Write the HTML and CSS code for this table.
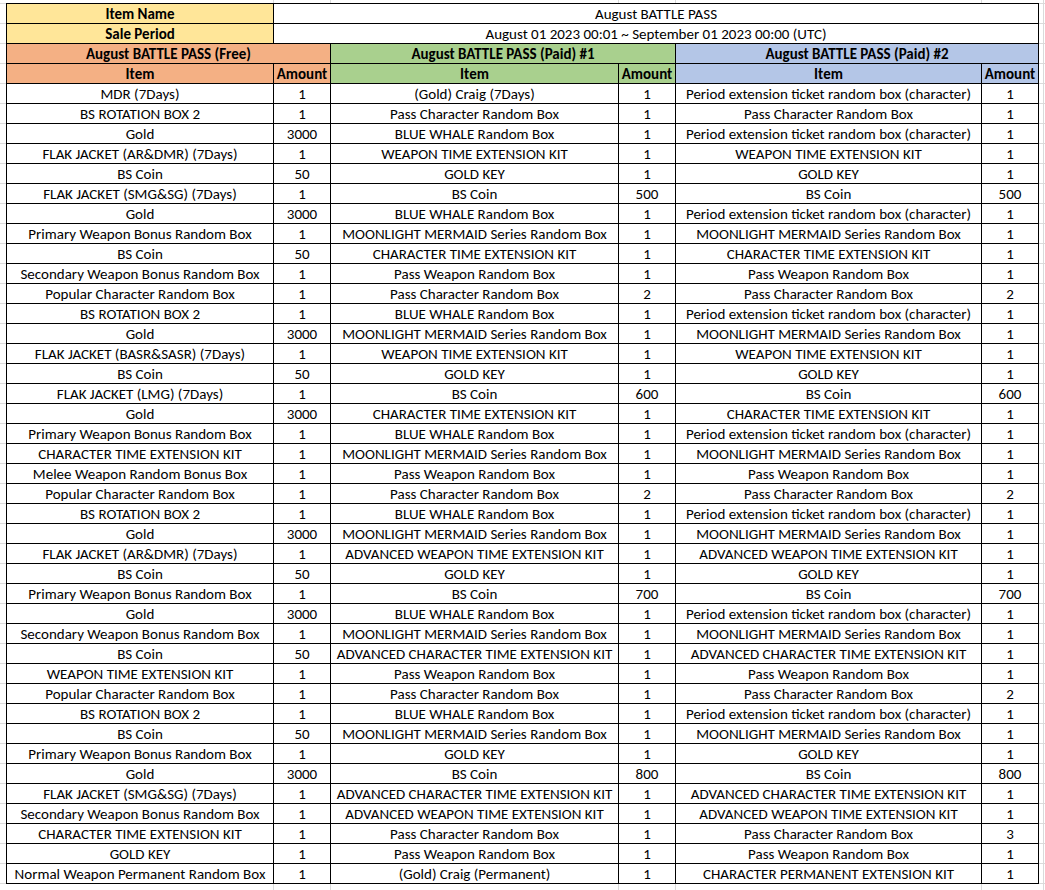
FILE: index.html
```html
<!DOCTYPE html>
<html>
<head>
<meta charset="utf-8">
<link rel="stylesheet" href="styles.css">
</head>
<body>
<div class="sheet">
<div class="grid">
  <div class="c h-yellow b">Item Name</div><div class="c span5">August BATTLE PASS</div>
  <div class="c h-yellow b">Sale Period</div><div class="c span5">August 01 2023 00:01 ~ September 01 2023 00:00 (UTC)</div>
  <div class="c h-salmon b span2">August BATTLE PASS (Free)</div><div class="c h-green b span2">August BATTLE PASS (Paid) #1</div><div class="c h-blue b span2">August BATTLE PASS (Paid) #2</div>
  <div class="c h-salmon b">Item</div><div class="c h-salmon b">Amount</div><div class="c h-green b">Item</div><div class="c h-green b">Amount</div><div class="c h-blue b">Item</div><div class="c h-blue b">Amount</div>

  <div class="c">MDR (7Days)</div><div class="c">1</div><div class="c">(Gold) Craig (7Days)</div><div class="c">1</div><div class="c">Period extension ticket random box (character)</div><div class="c">1</div>
  <div class="c">BS ROTATION BOX 2</div><div class="c">1</div><div class="c">Pass Character Random Box</div><div class="c">1</div><div class="c">Pass Character Random Box</div><div class="c">1</div>
  <div class="c">Gold</div><div class="c">3000</div><div class="c">BLUE WHALE Random Box</div><div class="c">1</div><div class="c">Period extension ticket random box (character)</div><div class="c">1</div>
  <div class="c">FLAK JACKET (AR&amp;DMR) (7Days)</div><div class="c">1</div><div class="c">WEAPON TIME EXTENSION KIT</div><div class="c">1</div><div class="c">WEAPON TIME EXTENSION KIT</div><div class="c">1</div>
  <div class="c">BS Coin</div><div class="c">50</div><div class="c">GOLD KEY</div><div class="c">1</div><div class="c">GOLD KEY</div><div class="c">1</div>
  <div class="c">FLAK JACKET (SMG&amp;SG) (7Days)</div><div class="c">1</div><div class="c">BS Coin</div><div class="c">500</div><div class="c">BS Coin</div><div class="c">500</div>
  <div class="c">Gold</div><div class="c">3000</div><div class="c">BLUE WHALE Random Box</div><div class="c">1</div><div class="c">Period extension ticket random box (character)</div><div class="c">1</div>
  <div class="c">Primary Weapon Bonus Random Box</div><div class="c">1</div><div class="c">MOONLIGHT MERMAID Series Random Box</div><div class="c">1</div><div class="c">MOONLIGHT MERMAID Series Random Box</div><div class="c">1</div>
  <div class="c">BS Coin</div><div class="c">50</div><div class="c">CHARACTER TIME EXTENSION KIT</div><div class="c">1</div><div class="c">CHARACTER TIME EXTENSION KIT</div><div class="c">1</div>
  <div class="c">Secondary Weapon Bonus Random Box</div><div class="c">1</div><div class="c">Pass Weapon Random Box</div><div class="c">1</div><div class="c">Pass Weapon Random Box</div><div class="c">1</div>
  <div class="c">Popular Character Random Box</div><div class="c">1</div><div class="c">Pass Character Random Box</div><div class="c">2</div><div class="c">Pass Character Random Box</div><div class="c">2</div>
  <div class="c">BS ROTATION BOX 2</div><div class="c">1</div><div class="c">BLUE WHALE Random Box</div><div class="c">1</div><div class="c">Period extension ticket random box (character)</div><div class="c">1</div>
  <div class="c">Gold</div><div class="c">3000</div><div class="c">MOONLIGHT MERMAID Series Random Box</div><div class="c">1</div><div class="c">MOONLIGHT MERMAID Series Random Box</div><div class="c">1</div>
  <div class="c">FLAK JACKET (BASR&amp;SASR) (7Days)</div><div class="c">1</div><div class="c">WEAPON TIME EXTENSION KIT</div><div class="c">1</div><div class="c">WEAPON TIME EXTENSION KIT</div><div class="c">1</div>
  <div class="c">BS Coin</div><div class="c">50</div><div class="c">GOLD KEY</div><div class="c">1</div><div class="c">GOLD KEY</div><div class="c">1</div>
  <div class="c">FLAK JACKET (LMG) (7Days)</div><div class="c">1</div><div class="c">BS Coin</div><div class="c">600</div><div class="c">BS Coin</div><div class="c">600</div>
  <div class="c">Gold</div><div class="c">3000</div><div class="c">CHARACTER TIME EXTENSION KIT</div><div class="c">1</div><div class="c">CHARACTER TIME EXTENSION KIT</div><div class="c">1</div>
  <div class="c">Primary Weapon Bonus Random Box</div><div class="c">1</div><div class="c">BLUE WHALE Random Box</div><div class="c">1</div><div class="c">Period extension ticket random box (character)</div><div class="c">1</div>
  <div class="c">CHARACTER TIME EXTENSION KIT</div><div class="c">1</div><div class="c">MOONLIGHT MERMAID Series Random Box</div><div class="c">1</div><div class="c">MOONLIGHT MERMAID Series Random Box</div><div class="c">1</div>
  <div class="c">Melee Weapon Random Bonus Box</div><div class="c">1</div><div class="c">Pass Weapon Random Box</div><div class="c">1</div><div class="c">Pass Weapon Random Box</div><div class="c">1</div>
  <div class="c">Popular Character Random Box</div><div class="c">1</div><div class="c">Pass Character Random Box</div><div class="c">2</div><div class="c">Pass Character Random Box</div><div class="c">2</div>
  <div class="c">BS ROTATION BOX 2</div><div class="c">1</div><div class="c">BLUE WHALE Random Box</div><div class="c">1</div><div class="c">Period extension ticket random box (character)</div><div class="c">1</div>
  <div class="c">Gold</div><div class="c">3000</div><div class="c">MOONLIGHT MERMAID Series Random Box</div><div class="c">1</div><div class="c">MOONLIGHT MERMAID Series Random Box</div><div class="c">1</div>
  <div class="c">FLAK JACKET (AR&amp;DMR) (7Days)</div><div class="c">1</div><div class="c">ADVANCED WEAPON TIME EXTENSION KIT</div><div class="c">1</div><div class="c">ADVANCED WEAPON TIME EXTENSION KIT</div><div class="c">1</div>
  <div class="c">BS Coin</div><div class="c">50</div><div class="c">GOLD KEY</div><div class="c">1</div><div class="c">GOLD KEY</div><div class="c">1</div>
  <div class="c">Primary Weapon Bonus Random Box</div><div class="c">1</div><div class="c">BS Coin</div><div class="c">700</div><div class="c">BS Coin</div><div class="c">700</div>
  <div class="c">Gold</div><div class="c">3000</div><div class="c">BLUE WHALE Random Box</div><div class="c">1</div><div class="c">Period extension ticket random box (character)</div><div class="c">1</div>
  <div class="c">Secondary Weapon Bonus Random Box</div><div class="c">1</div><div class="c">MOONLIGHT MERMAID Series Random Box</div><div class="c">1</div><div class="c">MOONLIGHT MERMAID Series Random Box</div><div class="c">1</div>
  <div class="c">BS Coin</div><div class="c">50</div><div class="c">ADVANCED CHARACTER TIME EXTENSION KIT</div><div class="c">1</div><div class="c">ADVANCED CHARACTER TIME EXTENSION KIT</div><div class="c">1</div>
  <div class="c">WEAPON TIME EXTENSION KIT</div><div class="c">1</div><div class="c">Pass Weapon Random Box</div><div class="c">1</div><div class="c">Pass Weapon Random Box</div><div class="c">1</div>
  <div class="c">Popular Character Random Box</div><div class="c">1</div><div class="c">Pass Character Random Box</div><div class="c">1</div><div class="c">Pass Character Random Box</div><div class="c">2</div>
  <div class="c">BS ROTATION BOX 2</div><div class="c">1</div><div class="c">BLUE WHALE Random Box</div><div class="c">1</div><div class="c">Period extension ticket random box (character)</div><div class="c">1</div>
  <div class="c">BS Coin</div><div class="c">50</div><div class="c">MOONLIGHT MERMAID Series Random Box</div><div class="c">1</div><div class="c">MOONLIGHT MERMAID Series Random Box</div><div class="c">1</div>
  <div class="c">Primary Weapon Bonus Random Box</div><div class="c">1</div><div class="c">GOLD KEY</div><div class="c">1</div><div class="c">GOLD KEY</div><div class="c">1</div>
  <div class="c">Gold</div><div class="c">3000</div><div class="c">BS Coin</div><div class="c">800</div><div class="c">BS Coin</div><div class="c">800</div>
  <div class="c">FLAK JACKET (SMG&amp;SG) (7Days)</div><div class="c">1</div><div class="c">ADVANCED CHARACTER TIME EXTENSION KIT</div><div class="c">1</div><div class="c">ADVANCED CHARACTER TIME EXTENSION KIT</div><div class="c">1</div>
  <div class="c">Secondary Weapon Bonus Random Box</div><div class="c">1</div><div class="c">ADVANCED WEAPON TIME EXTENSION KIT</div><div class="c">1</div><div class="c">ADVANCED WEAPON TIME EXTENSION KIT</div><div class="c">1</div>
  <div class="c">CHARACTER TIME EXTENSION KIT</div><div class="c">1</div><div class="c">Pass Character Random Box</div><div class="c">1</div><div class="c">Pass Character Random Box</div><div class="c">3</div>
  <div class="c">GOLD KEY</div><div class="c">1</div><div class="c">Pass Weapon Random Box</div><div class="c">1</div><div class="c">Pass Weapon Random Box</div><div class="c">1</div>
  <div class="c">Normal Weapon Permanent Random Box</div><div class="c">1</div><div class="c">(Gold) Craig (Permanent)</div><div class="c">1</div><div class="c">CHARACTER PERMANENT EXTENSION KIT</div><div class="c">1</div>
</div>
</div>
</body>
</html>
```

FILE: styles.css
```css
html, body {
  margin: 0;
  padding: 0;
  background: #ffffff;
}

body {
  width: 1045px;
  height: 890px;
  overflow: hidden;
  background-color: #ffffff;
  background-image:
    repeating-linear-gradient(to bottom, transparent 0, transparent 3px, #dadada 3px, #dadada 4px, transparent 4px, transparent 20px),
    linear-gradient(#dadada, #dadada),
    linear-gradient(#dadada, #dadada),
    linear-gradient(#dadada, #dadada),
    linear-gradient(#dadada, #dadada),
    linear-gradient(#dadada, #dadada),
    linear-gradient(#dadada, #dadada);
  background-size: 100% 20px, 1px 100%, 1px 100%, 1px 100%, 1px 100%, 1px 100%, 1px 100%;
  background-repeat: repeat, no-repeat, no-repeat, no-repeat, no-repeat, no-repeat, no-repeat;
  background-position: 0 0, 273px 0, 330px 0, 618px 0, 675px 0, 981px 0, 1043px 0;
  font-family: "Carlito", "Lato", "Liberation Sans", sans-serif;
  font-size: 15px;
  color: #000000;
}

.sheet {
  padding: 3px 0 0 6px;
}

.grid {
  display: inline-grid;
  grid-template-columns: 266px 56px 287px 56px 305px 56px;
  grid-auto-rows: 19px;
  gap: 1px;
  padding: 1px;
  background: #000000;
}

.c {
  background: #ffffff;
  text-align: center;
  line-height: 19px;
  padding-top: 1px;
  box-sizing: border-box;
  white-space: nowrap;
  overflow: hidden;
}

.b {
  font-weight: bold;
}

.span2 {
  grid-column: span 2;
}

.span5 {
  grid-column: span 5;
}

.h-yellow {
  background: #ffe699;
}

.h-salmon {
  background: #f4b084;
}

.h-green {
  background: #a9d08e;
}

.h-blue {
  background: #b4c6e7;
}
```
